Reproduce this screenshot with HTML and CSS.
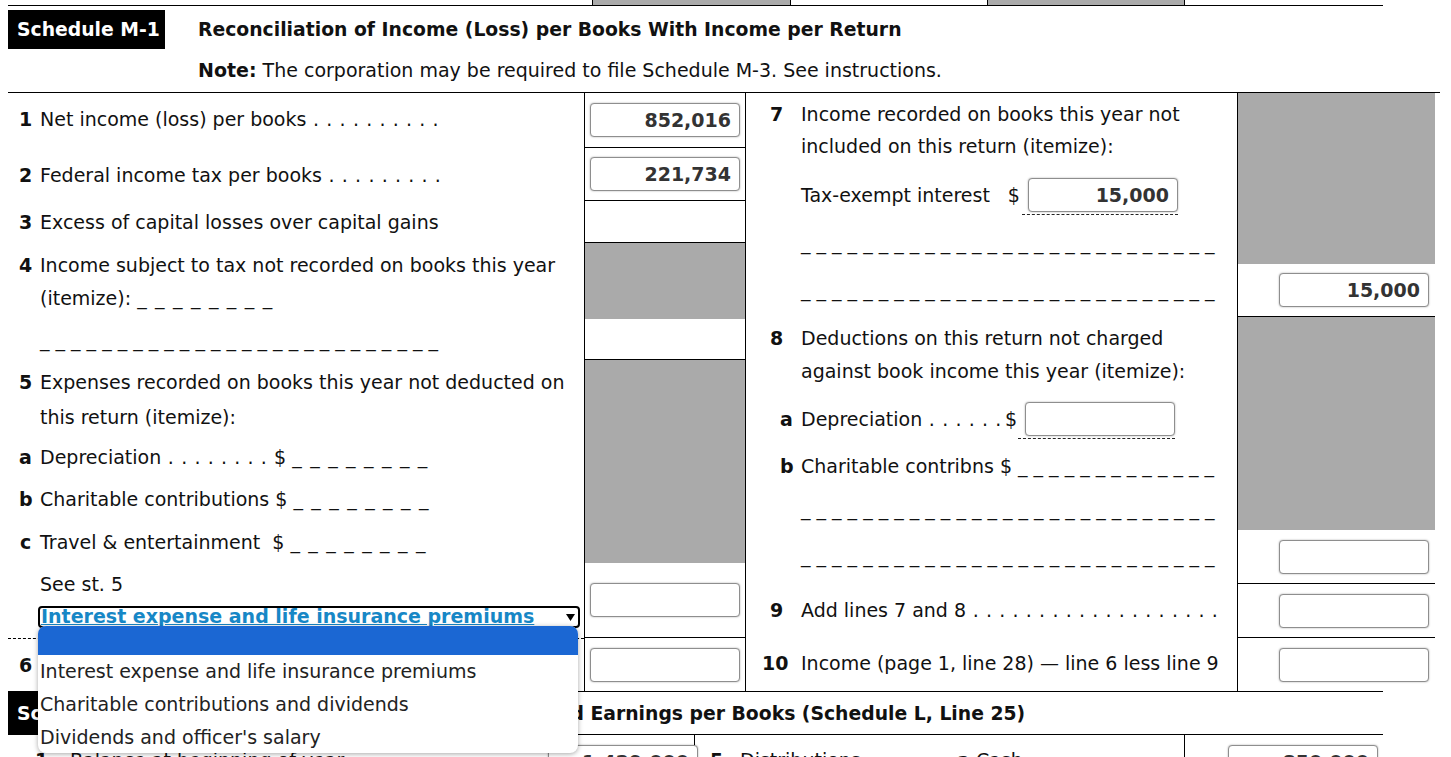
FILE: index.html
```html
<!DOCTYPE html>
<html>
<head>
<meta charset="utf-8">
<link rel="stylesheet" href="styles.css">
</head>
<body>
<div class="page">
  <div class="prev">
    <div class="pc pc1"></div><div class="pc pgray g1"></div><div class="pc pc3"></div><div class="pc pgray g2"></div><div class="pc pc5"></div>
  </div>

  <div class="head">
    <div class="head-row">
      <div class="badge">Schedule M-1</div>
      <div class="title">Reconciliation of Income (Loss) per Books With Income per Return</div>
    </div>
    <div class="note"><b>Note:</b> The corporation may be required to file Schedule M-3. See instructions.</div>
  </div>

  <div class="m1">
    <div class="colA">
      <div class="ln h55 up2"><span class="num">1</span>Net income (loss) per books<span class="dots"> . . . . . . . . . .</span></div>
      <div class="ln h53"><span class="num">2</span>Federal income tax per books<span class="dots"> . . . . . . . . .</span></div>
      <div class="ln h42"><span class="num">3</span>Excess of capital losses over capital gains</div>
      <div class="blk h76 pt5">
        <div class="ln lh33"><span class="num">4</span>Income subject to tax not recorded on books this year</div>
        <div class="ln lh33 ind">(itemize): <span class="dsh">_ _ _ _ _ _ _ _</span></div>
      </div>
      <div class="ln h41 ind">_ _ _ _ _ _ _ _ _ _ _ _ _ _ _ _ _ _ _ _ _ _ _ _ _ _</div>
      <div class="blk h203 pt6">
        <div class="ln lh32"><span class="num">5</span>Expenses recorded on books this year not deducted on</div>
        <div class="ln lh38 ind">this return (itemize):</div>
        <div class="ln lh42"><span class="num">a</span>Depreciation<span class="dots"> . . . . . . . . </span>$ <span class="dsh">_ _ _ _ _ _ _ _</span></div>
        <div class="ln lh42"><span class="num">b</span>Charitable contributions $ <span class="dsh">_ _ _ _ _ _ _ _</span></div>
        <div class="ln lh43"><span class="num nc">c</span>Travel &amp; entertainment&nbsp; $ <span class="dsh">_ _ _ _ _ _ _ _</span></div>
      </div>
      <div class="blk h75 pt5">
        <div class="ln lh32 ind">See st. 5</div>
        <div class="selbox">
          <span class="seltext">Interest expense and life insurance premiums</span>
          <svg class="selarrow" width="9" height="7" viewBox="0 0 9 7"><path d="M0 0 H9 L4.5 7 Z" fill="#000"/></svg>
        </div>
      </div>
      <div class="ln h53 dtop"><span class="num">6</span>Add lines 1 through 5</div>
    </div>

    <div class="colB">
      <div class="cell h55 bb"><input class="amt" value="852,016"></div>
      <div class="cell h53 bb"><input class="amt" value="221,734"></div>
      <div class="cell h42 bb"></div>
      <div class="cell h76 gray"></div>
      <div class="cell h41 bb"></div>
      <div class="cell h203 gray"></div>
      <div class="cell h75 bb"><input class="amt" value=""></div>
      <div class="cell h53"><input class="amt" value=""></div>
    </div>

    <div class="colC">
      <div class="rl h32 mt5"><span class="rn">7</span>Income recorded on books this year not</div>
      <div class="rl h32 rind">included on this return (itemize):</div>
      <div class="rl h66 rind">Tax-exempt interest<span class="dol1">$</span><span class="uline ul1"><input class="amt" value="15,000"></span></div>
      <div class="rl h30 rind">_ _ _ _ _ _ _ _ _ _ _ _ _ _ _ _ _ _ _ _ _ _ _ _ _ _ _</div>
      <div class="rl h64 rind">_ _ _ _ _ _ _ _ _ _ _ _ _ _ _ _ _ _ _ _ _ _ _ _ _ _ _</div>
      <div class="rl h32"><span class="rn">8</span>Deductions on this return not charged</div>
      <div class="rl h34 rind">against book income this year (itemize):</div>
      <div class="rl h62"><span class="rn ra">a</span>Depreciation<span class="dots"> . . . . . .</span><span class="dol2">$</span><span class="uline ul2"><input class="amt" value=""></span></div>
      <div class="rl h32"><span class="rn ra">b</span>Charitable contribns $ _ _ _ _ _ _ _ _ _ _ _ _ _</div>
      <div class="rl h54 rind">_ _ _ _ _ _ _ _ _ _ _ _ _ _ _ _ _ _ _ _ _ _ _ _ _ _ _</div>
      <div class="rl h40 rind">_ _ _ _ _ _ _ _ _ _ _ _ _ _ _ _ _ _ _ _ _ _ _ _ _ _ _</div>
      <div class="rl h68"><span class="rn">9</span>Add lines 7 and 8<span class="dots"> . . . . . . . . . . . . . . . . . . .</span></div>
      <div class="rl h38"><span class="rn r10">10</span>Income (page 1, line 28) — line 6 less line 9</div>
    </div>

    <div class="colD">
      <div class="dcell h171 gray"></div>
      <div class="dcell h53 bb"><input class="amt" value="15,000"></div>
      <div class="dcell h213 gray"></div>
      <div class="dcell h54 bb"><input class="amt" value=""></div>
      <div class="dcell h54 bb"><input class="amt" value=""></div>
      <div class="dcell h53"><input class="amt" value=""></div>
    </div>
  </div>

  <div class="head2">
    <div class="badge2">Schedule M-2</div>
    <div class="title2">Analysis of Unappropriated Retained Earnings per Books (Schedule L, Line 25)</div>
  </div>
  <div class="m2">
    <div class="m2left">
      <span class="num2">1</span><span class="m2text">Balance at beginning of year</span>
      <input class="amt amt2" value="1,429,000">
    </div>
    <div class="m2mid"><span class="num3">5</span>Distributions:<span class="cash"><b>a</b> Cash</span></div>
    <div class="m2right"><input class="amt" value="850,000"></div>
  </div>

  <div class="popup">
    <div class="opt sel"></div>
    <div class="opt">Interest expense and life insurance premiums</div>
    <div class="opt">Charitable contributions and dividends</div>
    <div class="opt">Dividends and officer's salary</div>
  </div>
</div>
</body>
</html>
```
FILE: styles.css
```css
html, body { margin: 0; padding: 0; background: #fff; }
body {
  font-family: "DejaVu Sans", Verdana, sans-serif;
  font-size: 19px;
  color: #111;
  overflow: hidden;
}
.page { padding-left: 8px; position: relative; }

/* tail of previous section */
.prev { display: flex; width: 1375px; height: 5px; border-bottom: 1px solid #000; }
.pc1 { width: 584px; }
.pgray { background: #aaa; border-left: 1px solid #000; border-right: 1px solid #000; }
.g1 { width: 197px; }
.pc3 { width: 196px; }
.g2 { width: 196px; }
.pc5 { flex: 1; }

/* schedule header */
.head { height: 86px; padding-top: 4px; box-sizing: border-box; }
.head-row { display: flex; align-items: center; }
.badge {
  width: 157px; height: 39px; box-sizing: border-box;
  background: #000; color: #fff; font-weight: bold;
  line-height: 39px; padding-left: 9px; white-space: nowrap;
  font-size: 18.8px;
}
.title { margin-left: 33px; font-weight: bold; line-height: 39px; white-space: nowrap; font-size: 18.8px; }
.note { margin-left: 190px; margin-top: 5px; line-height: 32px; white-space: nowrap; }

/* M-1 grid */
.m1 { display: flex; width: 1432px; border-top: 1px solid #000; }
.colA { width: 576px; display: flex; flex-direction: column; }
.colB { width: 160px; border-left: 1px solid #000; border-right: 1px solid #000; display: flex; flex-direction: column; }
.colC { width: 491px; display: flex; flex-direction: column; }
.colD { width: 197px; border-left: 1px solid #000; display: flex; flex-direction: column; }

.h30 { height: 30px; } .h32 { height: 32px; } .h34 { height: 34px; } .h38 { height: 38px; }
.h40 { height: 40px; } .h41 { height: 41px; } .h42 { height: 42px; } .h53 { height: 53px; }
.h54 { height: 54px; } .h55 { height: 55px; } .h62 { height: 62px; } .h64 { height: 64px; }
.h66 { height: 66px; } .h68 { height: 68px; } .h75 { height: 75px; } .h76 { height: 76px; }
.h171 { height: 171px; } .h203 { height: 203px; } .h213 { height: 213px; }
.mt5 { margin-top: 5px; }
.pt5 { padding-top: 5px; } .pt6 { padding-top: 6px; }
.up2 { padding-bottom: 3px; }

.blk { box-sizing: border-box; }
.ln { display: flex; align-items: center; white-space: pre; padding-left: 11px; box-sizing: border-box; flex-shrink: 0; }
.ln.ind { padding-left: 32px; }
.lh32 { height: 32px; } .lh33 { height: 33px; } .lh38 { height: 38px; } .lh42 { height: 42px; } .lh43 { height: 43px; }
.num { display: inline-block; width: 21px; font-weight: bold; }
.num.nc { padding-left: 1px; width: 20px; }
.dtop { border-top: 1px dashed #000; }
.dots { letter-spacing: 0.6px; }
.dsh { letter-spacing: 1.2px; }

.cell, .dcell { box-sizing: border-box; display: flex; align-items: center; flex-shrink: 0; }
.cell { justify-content: center; }
.dcell { justify-content: flex-end; padding-right: 6px; }
.bb { border-bottom: 1px solid #000; }
.gray { background: #aaa; }

.amt {
  width: 150px; height: 34px; box-sizing: border-box; margin: 0;
  border: 1px solid #8e8e8e; border-radius: 4px;
  box-shadow: 0 0 2px rgba(0,0,0,0.35);
  background: #fff;
  font-family: "DejaVu Sans", Verdana, sans-serif; font-size: 19px; font-weight: bold;
  color: #333; text-align: right; padding: 0 8px 0 4px;
}

/* right labels */
.rl { display: flex; align-items: center; white-space: pre; flex-shrink: 0; box-sizing: border-box; }
.rl.rind { padding-left: 55px; }
.rn { display: inline-block; width: 55px; padding-left: 24px; box-sizing: border-box; font-weight: bold; }
.rn.ra { padding-left: 34px; }
.rn.r10 { padding-left: 16px; }
.dol1 { margin-left: 18px; }
.dol2 { margin-left: 3px; }
.uline { display: inline-flex; border-bottom: 1px dashed #222; padding-bottom: 2px; margin-top: 3px; }
.ul1 { padding-left: 6px; margin-left: 2px; }
.ul2 { padding-left: 7px; margin-left: 1px; }

/* fake select */
.selbox {
  margin-top: 6px; margin-left: 30px; width: 542px; height: 22px; box-sizing: border-box;
  border: 2px solid #000; border-radius: 4px;
  display: flex; align-items: flex-start; position: relative; overflow: hidden;
}
.seltext {
  font-weight: bold; color: #1787c6; text-decoration: underline;
  white-space: nowrap; line-height: 18px; margin-top: -1px; padding-left: 1px;
}
.selarrow { position: absolute; right: 3px; top: 6px; }

/* M-2 */
.head2 {
  display: flex; width: 1375px; height: 44px; box-sizing: border-box;
  border-top: 1px solid #000; border-bottom: 1px solid #000;
  align-items: stretch;
}
.badge2 {
  width: 157px; background: #000; color: #fff; font-weight: bold; font-size: 18.8px;
  padding-left: 9px; box-sizing: border-box; display: flex; align-items: center; white-space: nowrap;
}
.title2 { margin-left: 28px; font-weight: bold; font-size: 18.8px; display: flex; align-items: center; white-space: nowrap; }
.m2 { display: flex; width: 1375px; height: 40px; }
.m2left { width: 686px; display: flex; align-items: flex-start; padding-top: 14px; box-sizing: border-box; position: relative; }
.num2 { font-weight: bold; margin-left: 27px; width: 35px; line-height: 22px; }
.m2text { line-height: 22px; white-space: nowrap; }
.amt2 { position: absolute; right: -4px; top: 10px; }
.m2mid { width: 491px; border-left: 1px solid #000; border-right: 1px solid #000; padding-top: 14px; line-height: 22px; white-space: nowrap; box-sizing: border-box; }
.num3 { font-weight: bold; display: inline-block; width: 30px; padding-left: 15px; }
.cash { margin-left: 90px; }
.m2right { flex: 1; display: flex; justify-content: flex-end; padding-right: 5px; padding-top: 10px; align-items: flex-start; }

/* open dropdown list */
.popup {
  position: absolute; left: 38px; top: 626px; width: 540px; height: 127px;
  background: #fff; border-radius: 8px; overflow: hidden;
  box-shadow: 0 1px 5px rgba(0,0,0,0.35);
}
.opt {
  height: 33px; line-height: 33px; padding-left: 2px; white-space: nowrap;
  font-family: "DejaVu Sans", Tahoma, sans-serif; font-size: 19px; color: #222;
}
.opt.sel { height: 29px; background: #1b67d3; }
```
